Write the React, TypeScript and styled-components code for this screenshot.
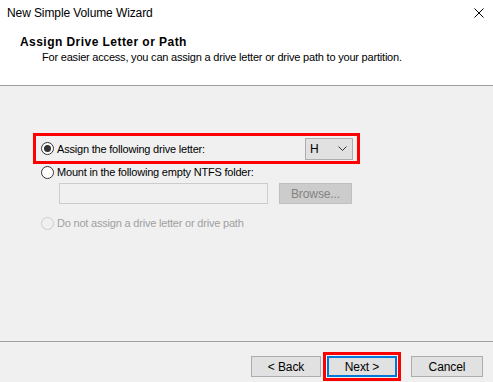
import styled, { createGlobalStyle } from "styled-components";

const GlobalStyle = createGlobalStyle`
  html, body {
    margin: 0;
    padding: 0;
    background: #f0f0f0;
  }
  body {
    font-family: "Liberation Sans", Arial, sans-serif;
    font-size: 11px;
    letter-spacing: -0.2px;
    color: #000;
  }
`;

const Window = styled.div`
  width: 493px;
  height: 382px;
  display: flex;
  flex-direction: column;
  overflow: hidden;
`;

const Header = styled.div`
  height: 85px;
  background: #fff;
  border-bottom: 1px solid #a0a0a0;
  display: flex;
  flex-direction: column;
`;

const TitleBar = styled.div`
  height: 30px;
  display: flex;
  align-items: center;
  justify-content: space-between;
  padding: 0 8px 4px 7px;
  font-size: 12px;
  letter-spacing: -0.1px;
  box-sizing: border-box;
`;

const CloseIcon = styled.svg`
  width: 10px;
  height: 10px;
  margin-right: 1px;
`;

const Heading = styled.div`
  font-weight: bold;
  font-size: 12px;
  letter-spacing: 0.45px;
  padding-left: 20px;
  line-height: 14px;
  margin-top: 5px;
`;

const Subtitle = styled.div`
  padding-left: 42px;
  line-height: 14px;
  margin-top: 1px;
`;

const Body = styled.div`
  flex: 1;
  display: flex;
  flex-direction: column;
  padding: 50px 0 0 36px;
`;

const Row = styled.div<{ $highlight?: boolean; $height: number; $disabled?: boolean }>`
  width: 321px;
  height: ${p => p.$height}px;
  box-sizing: border-box;
  padding: 0 4px 0 5px;
  display: flex;
  align-items: center;
  color: ${p => (p.$disabled ? "#a0a0a0" : "#000")};
  outline: ${p => (p.$highlight ? "3px solid #ff0000" : "none")};
`;

const Radio = styled.span<{ $checked?: boolean; $disabled?: boolean }>`
  width: 13px;
  height: 13px;
  box-sizing: border-box;
  border-radius: 50%;
  border: 1px solid ${p => (p.$disabled ? "#cccccc" : "#333333")};
  background: ${p => (p.$disabled ? "#f0f0f0" : "#fff")};
  display: flex;
  align-items: center;
  justify-content: center;
  flex-shrink: 0;
  margin-right: 3px;

  &::after {
    content: "";
    width: 7px;
    height: 7px;
    border-radius: 50%;
    background: #333333;
    display: ${p => (p.$checked ? "block" : "none")};
  }
`;

const Label = styled.span`
  flex: 1;
`;

const Combo = styled.div`
  width: 48px;
  height: 22px;
  box-sizing: border-box;
  background: #e1e1e1;
  border: 1px solid #adadad;
  display: flex;
  align-items: center;
  justify-content: space-between;
  padding: 0 5px 0 4px;
  font-size: 12px;
`;

const FolderRow = styled.div`
  display: flex;
  gap: 11px;
  padding-left: 23px;
`;

const PathField = styled.div`
  width: 209px;
  height: 21px;
  box-sizing: border-box;
  border: 1px solid #cccccc;
  background: #f0f0f0;
`;

const Button = styled.div<{ $width?: number; $disabled?: boolean; $default?: boolean; $highlight?: boolean }>`
  width: ${p => p.$width ?? 72}px;
  height: 21px;
  box-sizing: border-box;
  display: flex;
  align-items: center;
  justify-content: center;
  font-size: 12px;
  letter-spacing: -0.1px;
  background: ${p => (p.$disabled ? "#cccccc" : "#e1e1e1")};
  color: ${p => (p.$disabled ? "#838383" : "#000")};
  border: ${p => (p.$default ? "2px solid #0078d7" : `1px solid ${p.$disabled ? "#bfbfbf" : "#adadad"}`)};
  outline: ${p => (p.$highlight ? "3px solid #ff0000" : "none")};
  outline-offset: 1px;
`;

const Footer = styled.div`
  height: 41px;
  border-top: 1px solid #a0a0a0;
  display: flex;
  justify-content: flex-end;
  align-items: flex-start;
  padding: 14px 10px 0 0;
  box-sizing: border-box;
  gap: 6px;
`;

const Spacer = styled.div`
  width: 2px;
`;

export default function App() {
  return (
    <Window>
      <GlobalStyle />
      <Header>
        <TitleBar>
          <span>New Simple Volume Wizard</span>
          <CloseIcon viewBox="0 0 10 10">
            <path d="M0.5 0.5 L9.5 9.5 M9.5 0.5 L0.5 9.5" stroke="#000" strokeWidth="1" fill="none" />
          </CloseIcon>
        </TitleBar>
        <Heading>Assign Drive Letter or Path</Heading>
        <Subtitle>For easier access, you can assign a drive letter or drive path to your partition.</Subtitle>
      </Header>
      <Body>
        <Row $highlight $height={25}>
          <Radio $checked />
          <Label>Assign the following drive letter:</Label>
          <Combo>
            <span>H</span>
            <svg width="9" height="5" viewBox="0 0 9 5">
              <path d="M0.5 0.5 L4.5 4.5 L8.5 0.5" stroke="#333" strokeWidth="1" fill="none" />
            </svg>
          </Combo>
        </Row>
        <Row $height={22}>
          <Radio />
          <Label>Mount in the following empty NTFS folder:</Label>
        </Row>
        <FolderRow>
          <PathField />
          <Button $disabled $width={73}>Browse...</Button>
        </FolderRow>
        <Row $height={38} $disabled>
          <Radio $disabled />
          <Label>Do not assign a drive letter or drive path</Label>
        </Row>
      </Body>
      <Footer>
        <Button $width={70}>&lt; Back</Button>
        <Button $width={70} $default $highlight>Next &gt;</Button>
        <Spacer />
        <Button $width={72}>Cancel</Button>
      </Footer>
    </Window>
  );
}
